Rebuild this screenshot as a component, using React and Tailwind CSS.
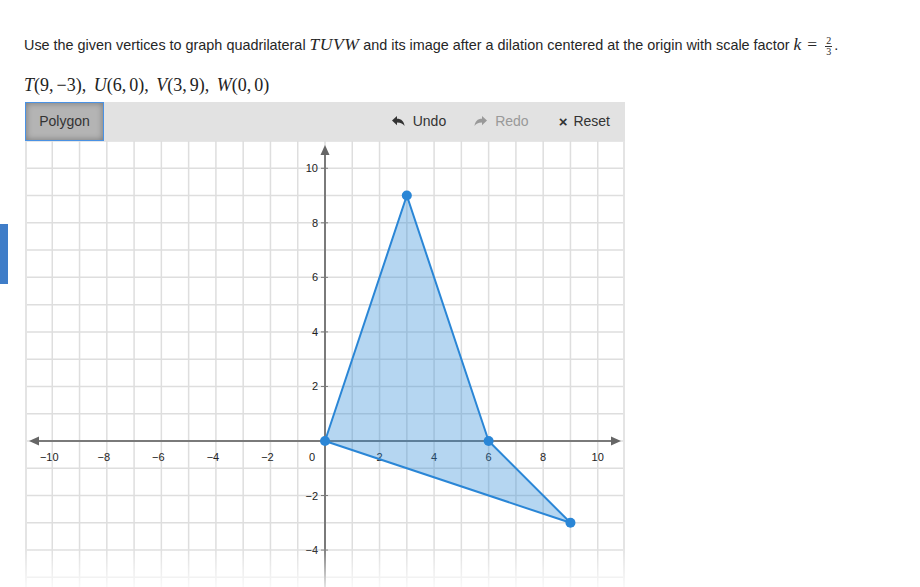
import React from "react";

const U = 600 / 22;
const O = 300;
const px = (x) => O + x * U;
const py = (y) => O - y * U;

const pts = [
  [9, -3],
  [6, 0],
  [3, 9],
  [0, 0],
];

const serif = { fontFamily: "'Liberation Serif', 'Times New Roman', serif" };

function MathVar({ children }) {
  return <span className="italic">{children}</span>;
}

function Graph() {
  const lines = [];
  for (let i = -11; i <= 11; i++) lines.push(i);
  const ticks = [-10, -8, -6, -4, -2, 2, 4, 6, 8, 10];
  const poly = pts.map(([x, y]) => `${px(x)},${py(y)}`).join(" ");
  const H = 446;

  return (
    <svg width="600" height={H} viewBox={`0 0 600 ${H}`} className="block">
      <rect x="0" y="0" width="600" height={H} fill="#ffffff" />
      {lines.map((i) => (
        <g key={i}>
          <line x1={px(i)} y1="0" x2={px(i)} y2={H} stroke="#dedede" strokeWidth="1.5" />
          <line x1="0" y1={py(i)} x2="600" y2={py(i)} stroke="#dedede" strokeWidth="1.5" />
        </g>
      ))}
      <line x1="1" y1="0" x2="1" y2={H} stroke="#e4e4e4" strokeWidth="2" />
      <line x1="599" y1="0" x2="599" y2={H} stroke="#e4e4e4" strokeWidth="2" />

      {/* axes */}
      <line x1="12" y1={O} x2="588" y2={O} stroke="#7a7a7a" strokeWidth="2" />
      <line x1={O} y1="12" x2={O} y2={H} stroke="#7a7a7a" strokeWidth="2" />
      <polygon points={`4,${O} 14,${O - 4.5} 14,${O + 4.5}`} fill="#666" />
      <polygon points={`596,${O} 586,${O - 4.5} 586,${O + 4.5}`} fill="#666" />
      <polygon points={`${O},4 ${O - 4.5},14 ${O + 4.5},14`} fill="#666" />

      {ticks.map((t) => (
        <g key={"x" + t} fontFamily="'Liberation Sans', Arial, sans-serif" fontSize="11" fill="#222">
          <text x={px(t) - (t < 0 ? 3 : 0)} y={O + 20} textAnchor="middle">
            {t < 0 ? "\u2212" + -t : t}
          </text>
          {py(t) + 6 < H && (
            <>
              <line x1={O - 4} y1={py(t)} x2={O + 3} y2={py(t)} stroke="#7a7a7a" strokeWidth="1" />
              <text x={O - 7} y={py(t) + 4} textAnchor="end">
                {t < 0 ? "\u2212" + -t : t}
              </text>
            </>
          )}
        </g>
      ))}
      <text x={O - 13} y={O + 20} textAnchor="middle" fontFamily="'Liberation Sans', Arial, sans-serif" fontSize="11" fill="#222">
        0
      </text>

      <polygon points={poly} fill="#2c8ad8" fillOpacity="0.35" stroke="#2a86d6" strokeWidth="2" strokeLinejoin="round" />
      {pts.map(([x, y]) => (
        <circle key={x + "," + y} cx={px(x)} cy={py(y)} r="5" fill="#2a86d6" />
      ))}
    </svg>
  );
}

function UndoIcon({ color }) {
  return (
    <svg width="13" height="11" viewBox="0 0 13 11" className="mr-2">
      <path d="M0 4.5 L5 0 L5 2.8 C9.5 2.8 12 5.5 12.5 10 C11 7.6 9 6.5 5 6.4 L5 9.2 Z" fill={color} />
    </svg>
  );
}

function RedoIcon({ color }) {
  return (
    <svg width="13" height="11" viewBox="0 0 13 11" className="mr-2">
      <path d="M13 4.5 L8 0 L8 2.8 C3.5 2.8 1 5.5 0.5 10 C2 7.6 4 6.5 8 6.4 L8 9.2 Z" fill={color} />
    </svg>
  );
}

export default function App() {
  return (
    <div
      className="relative h-screen overflow-hidden bg-white text-[#222]"
      style={{ fontFamily: "'Liberation Sans', Arial, Helvetica, sans-serif" }}
    >
      <div className="absolute left-0 top-[224px] w-2 h-[60px] bg-[#3f7dc8]" />

      <div className="pl-6 pt-[34px]">
        <p className="text-[14.4px] leading-[20px] text-[#262626]">
          Use the given vertices to graph quadrilateral{" "}
          <span className="text-[17.5px] tracking-[0.5px]" style={serif}>
            <MathVar>TUVW</MathVar>
          </span>{" "}
          and its image after a dilation centered at the origin with scale factor{" "}
          <span className="text-[17.5px]" style={serif}>
            <MathVar>k</MathVar>
            <span className="mx-[6px]">=</span>
          </span>
          <span
            className="inline-flex flex-col items-center align-middle text-[10px] leading-[10px] mx-[2px]"
            style={serif}
          >
            <span>2</span>
            <span className="border-t border-[#333] px-[1px]">3</span>
          </span>
          .
        </p>

        <p className="mt-[17px] text-[18px] leading-[22px] text-[#222]" style={serif}>
          <MathVar>T</MathVar>(9,<span className="ml-[3px]">−3</span>),{" "}
          <span className="ml-[3px]" />
          <MathVar>U</MathVar>(6,<span className="ml-[3px]">0</span>),{" "}
          <span className="ml-[3px]" />
          <MathVar>V</MathVar>(3,<span className="ml-[3px]">9</span>),{" "}
          <span className="ml-[3px]" />
          <MathVar>W</MathVar>(0,<span className="ml-[3px]">0</span>)
        </p>
      </div>

      <div className="ml-[25px] mt-[6px] w-[600px]">
        <div className="flex items-stretch h-[39px] bg-[#e2e2e2]">
          <div className="w-[79px] flex items-center justify-center border border-[#4a92e4] bg-[#b4b4b4] shadow-[inset_0_0_6px_rgba(0,0,0,0.35)] text-[14px] text-[#333]">
            Polygon
          </div>
          <div className="flex-1" />
          <div className="flex items-center px-[14px] text-[14px] text-[#333]">
            <UndoIcon color="#333" />
            Undo
          </div>
          <div className="flex items-center px-[14px] text-[14px] text-[#999]">
            <RedoIcon color="#999" />
            Redo
          </div>
          <div className="flex items-center pl-[16px] pr-[15px] text-[14px] text-[#333]">
            <span className="mr-[6px] text-[15px] font-bold leading-none">×</span>
            Reset
          </div>
        </div>
        <Graph />
      </div>

      <div className="absolute left-0 right-0 bottom-0 h-[40px] bg-gradient-to-b from-white/0 to-white/80 pointer-events-none" />
    </div>
  );
}
